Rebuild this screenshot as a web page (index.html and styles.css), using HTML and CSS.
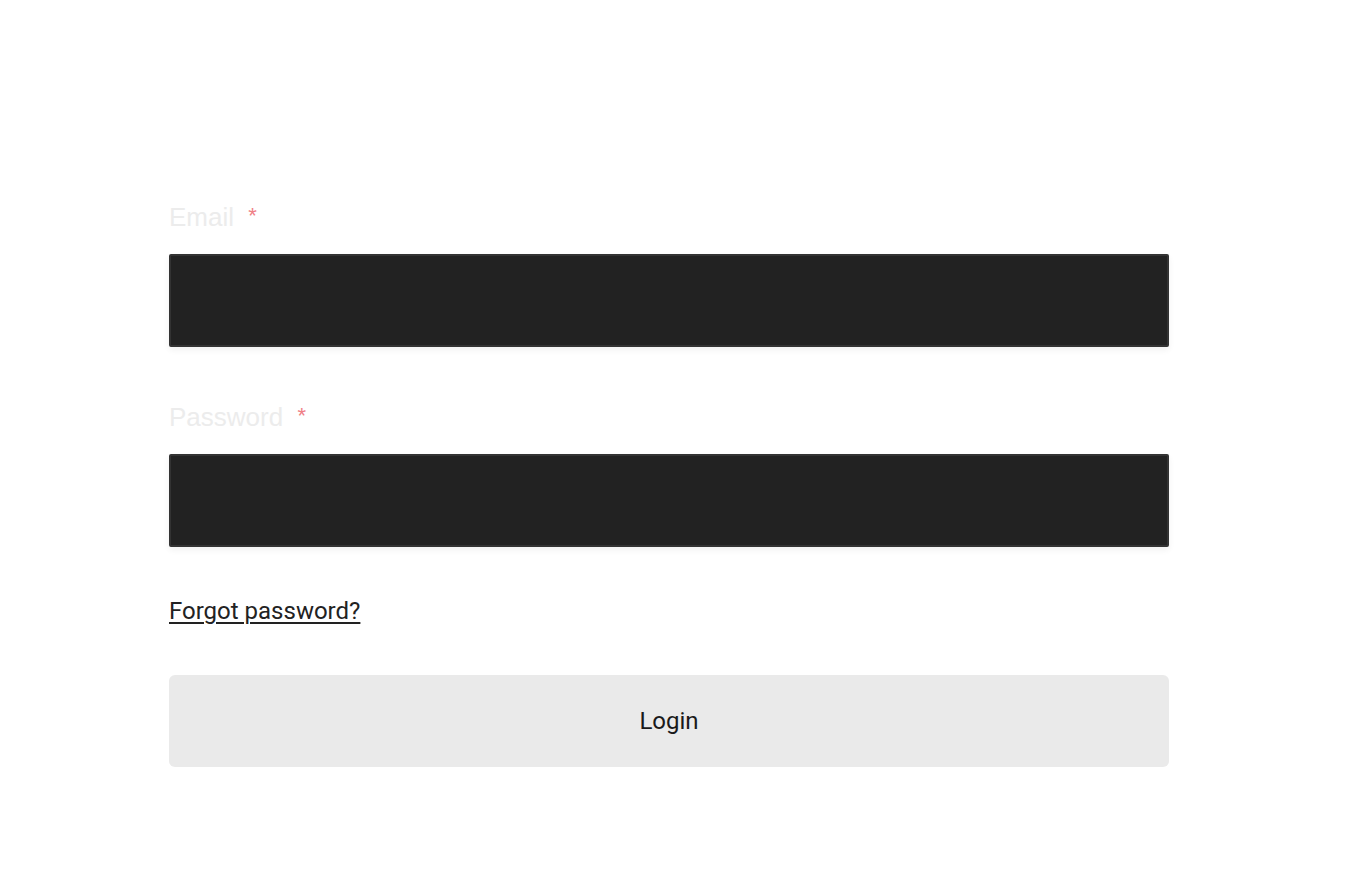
FILE: index.html
```html
<!DOCTYPE html>
<html>
<head>
<meta charset="utf-8">
<link rel="stylesheet" href="styles.css">
</head>
<body>
<form class="login-form">
  <div class="field">
    <label class="field-label">Email <span class="req">*</span></label>
    <input class="field-input" type="email">
  </div>
  <div class="field">
    <label class="field-label">Password <span class="req">*</span></label>
    <input class="field-input" type="password">
  </div>
  <a class="forgot" href="#">Forgot password?</a>
  <button class="login-btn" type="button">Login</button>
</form>
</body>
</html>
```

FILE: styles.css
```css
html, body {
  margin: 0;
  padding: 0;
  background: #fff;
}
body {
  padding: 202px 0 0 169px;
}
.login-form {
  width: 1000px;
  display: flex;
  flex-direction: column;
}
.field {
  display: flex;
  flex-direction: column;
  margin-bottom: 55px;
}
.field:nth-child(2) {
  margin-bottom: 50px;
}
.field-label {
  display: block;
  height: 30px;
  font-family: "Liberation Sans", Arial, sans-serif;
  font-size: 26px;
  line-height: 30px;
  color: #ececec;
  margin-bottom: 22px;
}
.req {
  color: #ef7f86;
  font-size: 22px;
  line-height: 0;
  margin-left: 7px;
  position: relative;
  top: -3px;
}
.field-input {
  box-sizing: border-box;
  height: 93px;
  width: 1000px;
  margin: 0;
  background: #222;
  border: 2px solid #333;
  border-radius: 2px;
  box-shadow: 0 3px 6px rgba(0,0,0,0.06);
  outline: none;
}
.forgot {
  align-self: flex-start;
  font-family: Roboto, "Noto Sans", sans-serif;
  font-size: 24px;
  line-height: 28px;
  color: #222;
  text-decoration: underline;
  text-underline-offset: 3px;
  text-decoration-thickness: 2px;
}
.login-btn {
  margin-top: 50px;
  height: 92px;
  width: 1000px;
  border: none;
  border-radius: 6px;
  background: #eaeaea;
  font-family: Roboto, "Noto Sans", sans-serif;
  font-size: 24px;
  color: #1a1a1a;
  padding: 0;
}
```
